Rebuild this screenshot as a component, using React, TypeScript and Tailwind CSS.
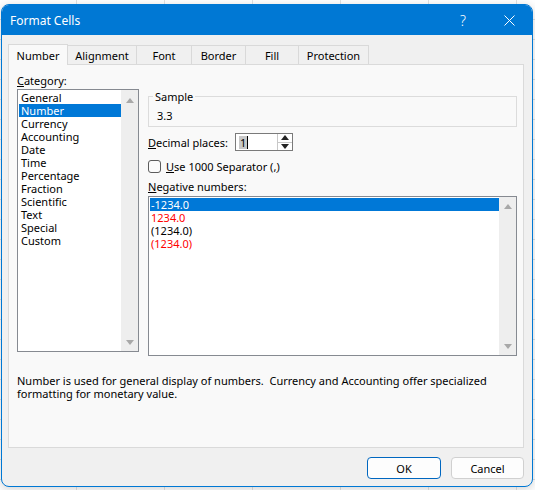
import React from "react";

const categories = [
  "General",
  "Number",
  "Currency",
  "Accounting",
  "Date",
  "Time",
  "Percentage",
  "Fraction",
  "Scientific",
  "Text",
  "Special",
  "Custom",
];

const negatives = [
  { label: "-1234.0", red: false },
  { label: "1234.0", red: true },
  { label: "(1234.0)", red: false },
  { label: "(1234.0)", red: true },
];

const tabs = [
  { label: "Alignment", width: "w-[69px]" },
  { label: "Font", width: "w-[55px]" },
  { label: "Border", width: "w-[54px]" },
  { label: "Fill", width: "w-[53px]" },
  { label: "Protection", width: "w-[70px]" },
];

function Arrow({ dir, color }: { dir: "up" | "down"; color: string }) {
  return (
    <svg width="8" height="5" viewBox="0 0 8 5">
      <path d={dir === "up" ? "M4 0L8 5H0z" : "M0 0H8L4 5z"} fill={color} />
    </svg>
  );
}

function ScrollBar({ top }: { top: string }) {
  return (
    <div className={`flex w-[17px] flex-col items-center justify-between bg-[#eeeeee] pb-[6px] ${top}`}>
      <Arrow dir="up" color="#a8a8a8" />
      <Arrow dir="down" color="#a8a8a8" />
    </div>
  );
}

export default function App() {
  return (
    <div className="h-[490px] w-[535px] overflow-hidden bg-white pl-[1px] pt-[4px] font-['Noto_Sans',sans-serif] text-[11px] leading-[13px] text-black [background-image:linear-gradient(to_right,#e2e2e2_1px,transparent_1px),linear-gradient(to_bottom,#e2e2e2_1px,transparent_1px)] [background-position:76px_19px] [background-size:88px_20px]">
      <div className="flex h-[483px] w-[532px] flex-col overflow-hidden rounded-[8px] border border-[#0078d4] bg-[#f0f0f0] shadow-[0_2px_10px_rgba(0,0,0,0.18)]">
        {/* title bar */}
        <div className="flex h-[30px] shrink-0 items-center bg-[#0078d4] pl-[8px] text-white">
          <span className="text-[12px]">Format Cells</span>
          <div className="ml-auto flex h-full">
            <div className="flex w-[46px] items-center justify-center text-[14px] font-light">?</div>
            <div className="flex w-[46px] items-center justify-center">
              <svg width="11" height="11" viewBox="0 0 11 11">
                <path d="M0.5 0.5L10.5 10.5M10.5 0.5L0.5 10.5" stroke="#fff" strokeWidth="1" />
              </svg>
            </div>
          </div>
        </div>

        {/* tabs */}
        <div className="ml-[6px] mt-[9px] flex h-[21px] items-end">
          <div className="relative z-10 flex h-[21px] w-[60px] items-center justify-center border-x border-t border-[#d9d9d9] bg-[#f9f9f9]">
            Number
          </div>
          {tabs.map((t) => (
            <div
              key={t.label}
              className={`flex h-[20px] items-center justify-center border-r border-t border-[#d9d9d9] bg-[#f0f0f0] ${t.width}`}
            >
              {t.label}
            </div>
          ))}
        </div>

        {/* tab panel */}
        <div className="-mt-px ml-[6px] flex h-[384px] w-[516px] flex-col border border-[#dadada] bg-[#f9f9f9] pl-[8px]">
          <div className="flex">
            {/* category */}
            <div className="flex w-[122px] flex-col pt-[9px]">
              <div>
                <span className="underline">C</span>ategory:
              </div>
              <div className="mt-[2px] flex h-[263px] border border-[#868a91] bg-white">
                <div className="flex flex-1 flex-col pl-[1px] pt-[1px]">
                  {categories.map((c) => (
                    <div
                      key={c}
                      className={`h-[13px] pl-[2px] ${c === "Number" ? "bg-[#0078d7] text-white" : ""}`}
                    >
                      {c}
                    </div>
                  ))}
                </div>
                <ScrollBar top="pt-[8px]" />
              </div>
            </div>

            {/* options */}
            <div className="ml-[9px] flex w-[369px] flex-col pt-[25px]">
              <fieldset className="h-[37px] border border-[#dcdcdc] pb-[4px]">
                <legend className="ml-[4px] px-[2px]">Sample</legend>
                <div className="pl-[8px] pt-[6px]">3.3</div>
              </fieldset>

              <div className="mt-[6px] flex items-center">
                <div className="w-[87px]">
                  <span className="underline">D</span>ecimal places:
                </div>
                <div className="flex h-[18px] w-[58px] border border-[#7a7a7a] bg-white">
                  <div className="flex flex-1 items-center pl-[3px]">
                    <span className="bg-[#c8c8c8] px-px">1</span>
                    <span className="h-[13px] w-px bg-black" />
                  </div>
                  <div className="flex w-[15px] flex-col border-l border-[#c8c8c8]">
                    <div className="flex flex-1 items-center justify-center border-b border-[#c8c8c8]">
                      <Arrow dir="up" color="#222" />
                    </div>
                    <div className="flex flex-1 items-center justify-center">
                      <Arrow dir="down" color="#222" />
                    </div>
                  </div>
                </div>
              </div>

              <div className="mt-[8px] flex h-[14px] items-center">
                <div className="h-[13px] w-[13px] rounded-[3px] border border-[#5c5c5c] bg-[#fbfbfb]" />
                <span className="ml-[5px]">
                  <span className="underline">U</span>se 1000 Separator (<span className="underline">,</span>)
                </span>
              </div>

              <div className="mt-[7px]">
                <span className="underline">N</span>egative numbers:
              </div>
              <div className="mt-[3px] flex h-[160px] border border-[#868a91] bg-white">
                <div className="flex flex-1 flex-col pl-[1px] pt-[1px]">
                  {negatives.map((n, i) => (
                    <div
                      key={i}
                      className={`h-[13px] pl-px ${
                        i === 0 ? "bg-[#0078d7] text-white" : n.red ? "text-[#ff0000]" : ""
                      }`}
                    >
                      {n.label}
                    </div>
                  ))}
                </div>
                <ScrollBar top="pt-[7px]" />
              </div>
            </div>
          </div>

          <p className="mt-[18px] whitespace-nowrap">
            Number is used for general display of numbers.{"\u00a0"} Currency and Accounting offer specialized
            <br />
            formatting for monetary value.
          </p>
        </div>

        {/* buttons */}
        <div className="mt-[9px] flex justify-end pr-[8px]">
          <button className="h-[22px] w-[74px] rounded-[4px] border border-[#0067c0] bg-[#fdfdfd]">OK</button>
          <button className="ml-[10px] h-[22px] w-[73px] rounded-[4px] border border-[#d0d0d0] bg-[#fdfdfd]">
            Cancel
          </button>
        </div>
      </div>
    </div>
  );
}
